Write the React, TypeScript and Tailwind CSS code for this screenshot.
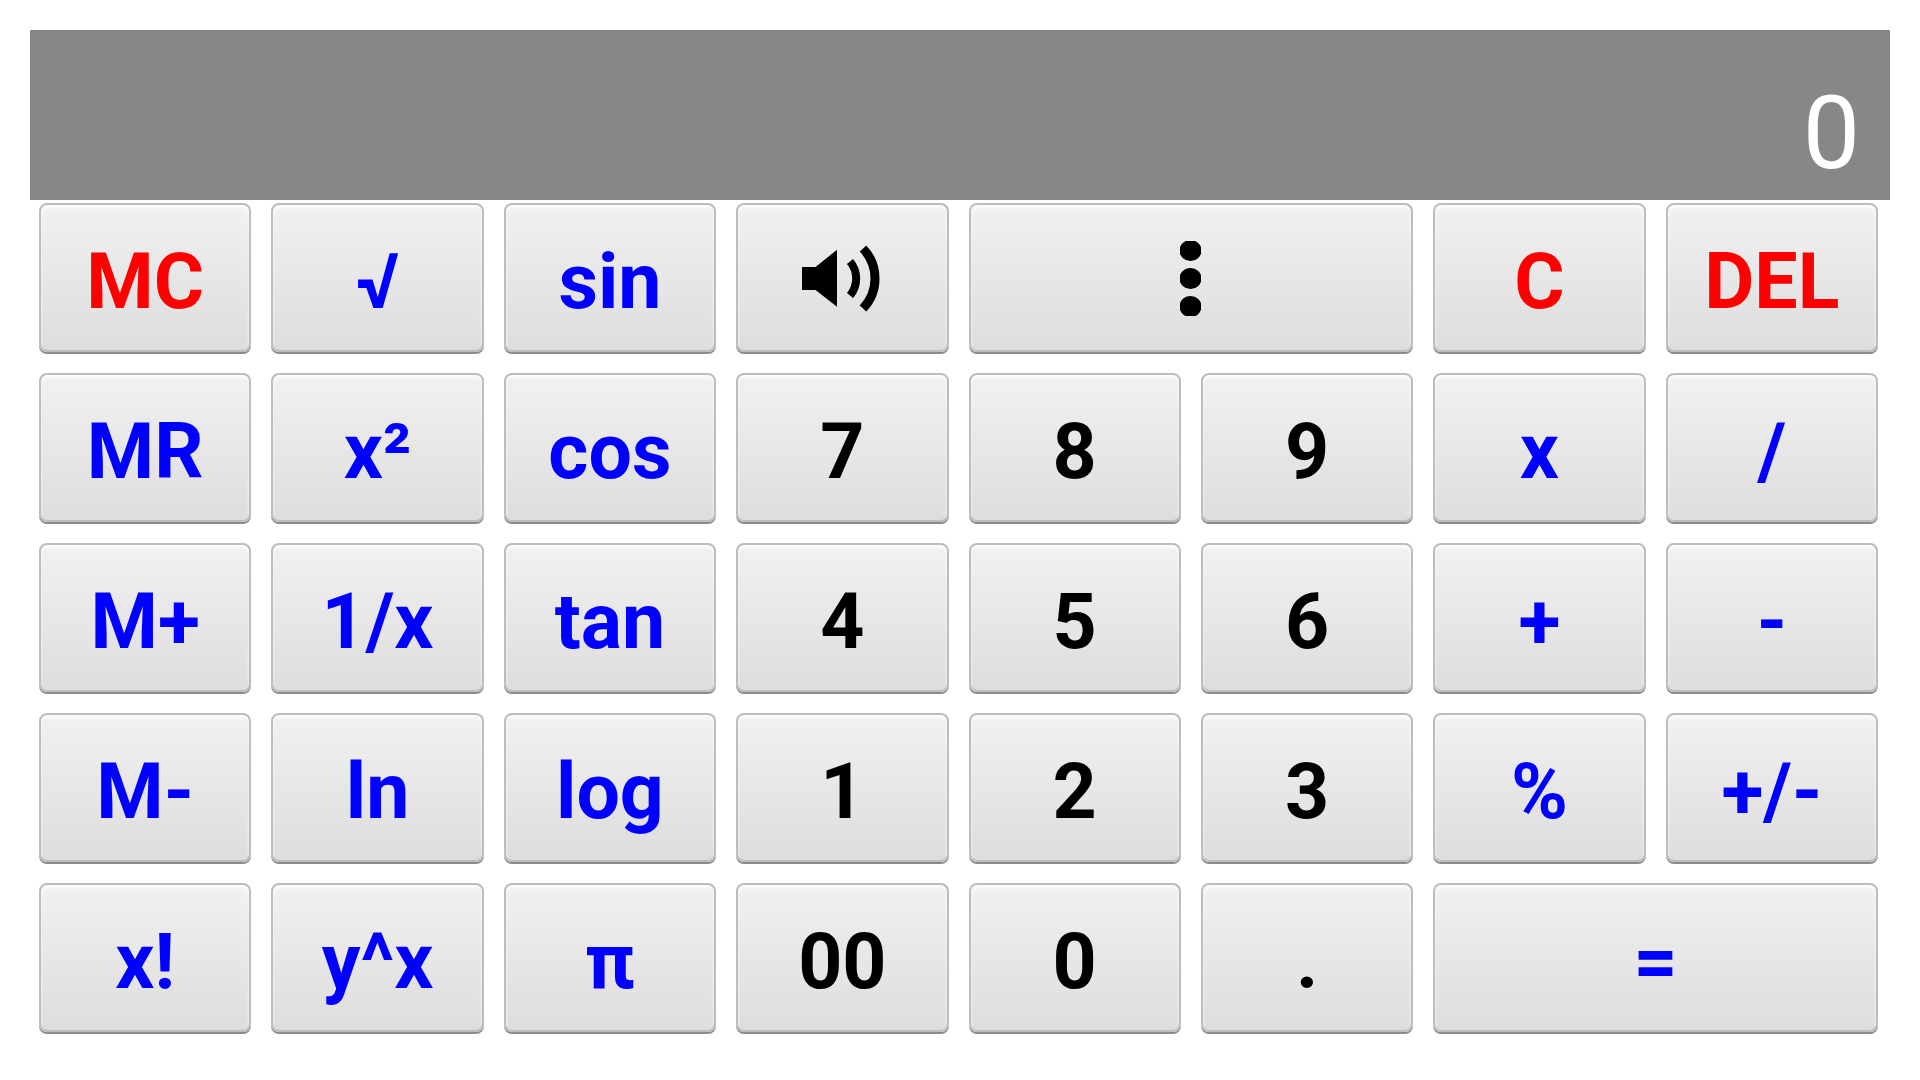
import React from "react";

type Key = {
  label: string;
  color: string;
  wide?: boolean;
  icon?: React.ReactNode;
};

const RED = "text-[#ff0000]";
const BLUE = "text-[#0000ff]";
const BLACK = "text-black";

const SpeakerIcon = () => (
  <svg width={96} height={96} viewBox="0 0 96 96" aria-hidden="true">
    <path d="M8 36H21.500L43 18.800v57L21.500 59H8z" fill="#000" />
    <path d="M56 30.500a26.400 26.400 0 0 1 0 34" fill="none" stroke="#000" strokeWidth={8} />
    <path d="M69 17.500a43.500 43.500 0 0 1 0 60" fill="none" stroke="#000" strokeWidth={9} />
  </svg>
);

const MenuIcon = () => (
  <svg width={21} height={75} viewBox="0 0 21 75" aria-hidden="true">
    <ellipse cx={10.5} cy={9.5} rx={11} ry={10.5} />
    <ellipse cx={10.5} cy={37.5} rx={11} ry={10.5} />
    <ellipse cx={10.5} cy={65.5} rx={11} ry={10.5} />
  </svg>
);

const keys: Key[] = [
  { label: "MC", color: RED },
  { label: "√", color: BLUE },
  { label: "sin", color: BLUE },
  { label: "Sound", color: BLACK, icon: <SpeakerIcon /> },
  { label: "Menu", color: BLACK, wide: true, icon: <MenuIcon /> },
  { label: "C", color: RED },
  { label: "DEL", color: RED },

  { label: "MR", color: BLUE },
  { label: "x²", color: BLUE },
  { label: "cos", color: BLUE },
  { label: "7", color: BLACK },
  { label: "8", color: BLACK },
  { label: "9", color: BLACK },
  { label: "x", color: BLUE },
  { label: "/", color: BLUE },

  { label: "M+", color: BLUE },
  { label: "1/x", color: BLUE },
  { label: "tan", color: BLUE },
  { label: "4", color: BLACK },
  { label: "5", color: BLACK },
  { label: "6", color: BLACK },
  { label: "+", color: BLUE },
  { label: "-", color: BLUE },

  { label: "M-", color: BLUE },
  { label: "ln", color: BLUE },
  { label: "log", color: BLUE },
  { label: "1", color: BLACK },
  { label: "2", color: BLACK },
  { label: "3", color: BLACK },
  { label: "%", color: BLUE },
  { label: "+/-", color: BLUE },

  { label: "x!", color: BLUE },
  { label: "y^x", color: BLUE },
  { label: "π", color: BLUE },
  { label: "00", color: BLACK },
  { label: "0", color: BLACK },
  { label: ".", color: BLACK },
  { label: "=", color: BLUE, wide: true },
];

const CalcButton = ({ item }: { item: Key }) => {
  return (
    <button
      type="button"
      aria-label={item.icon ? item.label : undefined}
      className={`flex min-w-0 items-center justify-center rounded-lg border-2 border-[#bdbdbd] bg-linear-to-b from-[#f1f1f1] to-[#dddddd] pt-0.5 shadow-[0_2px_0_#8b8b8b,inset_0_3px_3px_#fcfcfc] ${item.color} ${item.wide ? "col-span-2" : ""}`}
    >
      {item.icon ? item.icon : <span className="pt-1.5">{item.label}</span>}
    </button>
  );
};

const App = () => {
  return (
    <main className="flex h-screen min-h-[720px] flex-col bg-white px-[30px] pt-[30px] pb-12 font-['Roboto',sans-serif]">
      <output className="flex h-[170px] shrink-0 items-end justify-end bg-[#878787] px-[30px] pb-[7px] text-[102px] leading-[120px] text-white">
        0
      </output>
      <div className="mt-[3px] mr-3 ml-[9px] grid flex-1 grid-cols-8 grid-rows-5 gap-x-5 gap-y-[21px] text-[77px] leading-[90px] font-bold">
        {keys.map((item, index) => (
          <CalcButton key={index} item={item} />
        ))}
      </div>
    </main>
  );
};

export default App;
